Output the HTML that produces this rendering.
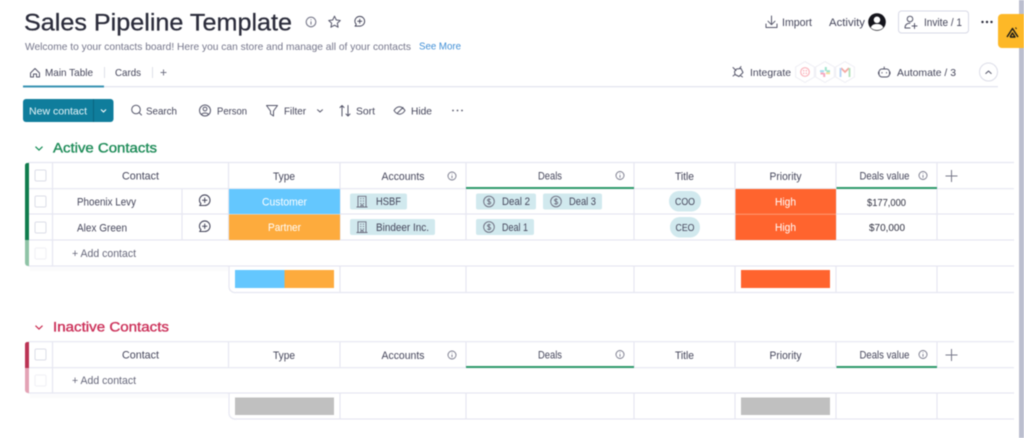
<!DOCTYPE html>
<html><head><meta charset="utf-8"><style>
html,body{margin:0;padding:0;background:#fff;width:1024px;height:438px;overflow:hidden}
svg{display:block;filter:blur(.45px)}
text{font-family:"Liberation Sans",sans-serif;font-size:11px;fill:#44455a}
.w{fill:#fff;font-size:11px}
.l{stroke:#e6e7f1;stroke-width:1.2;fill:none}
.i{stroke:#55566a;stroke-width:1;fill:none;stroke-linecap:round;stroke-linejoin:round}
.cb{fill:#fff;stroke:#dcdde8;stroke-width:1}
.chip{fill:#d1e9ee}
</style></head><body>
<svg width="1024" height="438" viewBox="0 0 1024 438" xmlns="http://www.w3.org/2000/svg">
<defs>
<symbol id="info" viewBox="0 0 10 10" overflow="visible"><circle cx="5" cy="5" r="4" fill="none" stroke="#77788a" stroke-width=".9"/><path d="M5 4.500V7.200M5 2.800V3.400" stroke="#77788a" stroke-width=".9" fill="none"/></symbol>
<symbol id="upd" viewBox="0 0 14 14" overflow="visible"><path d="M2.600 10.200C1.500 9.200 1 8 1 6.700A5.700 5.700 0 1 1 6.700 12.400H1.200C1.900 11.800 2.400 11 2.600 10.200Z" fill="none" stroke="#44455a" stroke-width="1.100" stroke-linejoin="round"/><path d="M6.700 3.900V9.500M3.900 6.700H9.500" stroke="#44455a" stroke-width="1.100" fill="none"/></symbol>
<symbol id="bld" viewBox="0 0 12 12" overflow="visible"><path d="M.5 11.500H11.500M2 11.500V.8H10V11.500M4.200 3.200H5.400M6.800 3.200H8M4.200 5.600H5.400M6.800 5.600H8M4.200 8H5.400M6.800 8H8M5 11.500V9.500H7V11.500" fill="none" stroke="#6a6b7d" stroke-width=".9"/></symbol>
<symbol id="usd" viewBox="0 0 12 12" overflow="visible"><circle cx="6" cy="6" r="5.300" fill="none" stroke="#6a6b7d" stroke-width=".9"/><path d="M7.700 4.200C7.200 3.400 4.400 3.200 4.400 4.700S7.800 5.600 7.800 7.300 4.800 8.800 4.200 7.800M6 2.600V9.400" fill="none" stroke="#6a6b7d" stroke-width=".8"/></symbol>
<symbol id="hex" viewBox="0 0 20 22" overflow="visible"><path d="M10 .6L19.400 6V16L10 21.400.6 16V6Z" fill="#fff" stroke="#eeeef4" stroke-width="1"/></symbol>
</defs>

<!-- Header -->
<text x="24" y="30.500" textLength="268" lengthAdjust="spacingAndGlyphs" style="font-size:24px;fill:#2a2b3a;stroke:#2a2b3a;stroke-width:.25">Sales Pipeline Template</text>
<use href="#info" x="305" y="16" width="12" height="12"/>
<path class="i" d="M334.500 16.200L336.300 20L340.300 20.500 337.300 23.200 338.100 27.200 334.500 25.200 330.900 27.200 331.700 23.200 328.700 20.500 332.700 20Z"/>
<use href="#upd" x="354" y="15.500" width="12" height="12"/>
<text x="25" y="50" textLength="386" lengthAdjust="spacingAndGlyphs" style="font-size:10.500px;fill:#74758a">Welcome to your contacts board! Here you can store and manage all of your contacts</text>
<text x="419" y="49.500" textLength="42" lengthAdjust="spacingAndGlyphs" style="font-size:10.500px;fill:#3f8ed6">See More</text>

<!-- Top right -->
<path class="i" d="M771.500 16V24.500M768 21.200L771.500 24.700 775 21.200M766 24V27.500H777V24" stroke="#44455a"/>
<text x="782" y="26" textLength="30" lengthAdjust="spacingAndGlyphs">Import</text>
<text x="829" y="26" textLength="36" lengthAdjust="spacingAndGlyphs">Activity</text>
<circle cx="877" cy="22" r="8.800" fill="#15151c"/>
<circle cx="877" cy="19.800" r="3.300" fill="#fff"/>
<path d="M870.800 27.500C871.800 24.800 874 24 877 24S882.200 24.800 883.200 27.500C881.500 29.400 879.500 30 877 30S872.500 29.400 870.800 27.500Z" fill="#fff"/>
<rect x="898.500" y="11" width="70" height="22" rx="3" fill="#fff" stroke="#d8d9e6"/>
<circle cx="910" cy="19" r="2.800" class="i"/>
<path class="i" d="M905 28C905 24.500 907 23.200 910 23.200M905 28H910M912 26H917M914.500 23.500V28.500"/>
<text x="924" y="26" textLength="38" lengthAdjust="spacingAndGlyphs">Invite / 1</text>
<circle cx="982.500" cy="22" r="1.200" fill="#2a2b3a"/><circle cx="987" cy="22" r="1.200" fill="#2a2b3a"/><circle cx="991.500" cy="22" r="1.200" fill="#2a2b3a"/>
<rect x="1019" y="0" width="5" height="438" fill="#bcbfcf"/>
<path d="M1024 14H1002A4 4 0 0 0 998 18V44A4 4 0 0 0 1002 48H1024Z" fill="#fdb827"/>
<path d="M1007 37L1012.500 28.500 1018 37M1010 37L1012.500 33 1015 37H1010" fill="none" stroke="#1a1a1a" stroke-width="1.400" stroke-linejoin="round"/>
<path d="M1015.500 27.500L1016.500 29" stroke="#1a1a1a" stroke-width="1"/>

<!-- Tabs -->
<path class="i" d="M30.500 73L35 68.500 39.500 73V77H36.500V74H33.500V77H30.500Z"/>
<text x="45" y="76" textLength="48" lengthAdjust="spacingAndGlyphs" style="font-size:10.500px">Main Table</text>
<path d="M104.500 67V78M152.500 67V78" stroke="#dfe0ea"/>
<text x="115" y="76" textLength="26" lengthAdjust="spacingAndGlyphs" style="font-size:10.500px">Cards</text>
<path d="M163.500 69.500V75.500M160.500 72.500H166.500" stroke="#77788a" stroke-width="1"/>
<rect x="23" y="86" width="975" height="1.300" fill="#e4e5f0"/>
<rect x="23" y="85.500" width="81" height="2" fill="#3a93b3"/>
<path class="i" d="M733 67.500L736 70.500M741 66.500L739.500 68.500M736.500 69L741 68.500 743 72.500 739 76.500 735 74.500 734.500 71.500ZM733 76L735 74.500M742.500 77L740.500 75.500"/>
<text x="750" y="76" textLength="41" lengthAdjust="spacingAndGlyphs" style="font-size:10.500px">Integrate</text>
<use href="#hex" x="795" y="61" width="20" height="22"/><use href="#hex" x="815" y="61" width="20" height="22"/><use href="#hex" x="835" y="61" width="20" height="22"/>
<circle cx="805" cy="72" r="4.300" fill="none" stroke="#fbb4bc" stroke-width="1.200"/><circle cx="803.700" cy="70.700" r=".8" fill="#fbb4bc"/><circle cx="806.300" cy="70.700" r=".8" fill="#fbb4bc"/><circle cx="803.700" cy="73.300" r=".8" fill="#fbb4bc"/><circle cx="806.300" cy="73.300" r=".8" fill="#fbb4bc"/>
<path d="M825.800 67V71" stroke="#9fe3cc" stroke-width="2"/><path d="M824.200 73V77" stroke="#f5a8c0" stroke-width="2"/><path d="M820 71.200H824" stroke="#a5dcf0" stroke-width="2"/><path d="M826 73.200H830" stroke="#f7dd9e" stroke-width="2"/><path d="M820.500 73.500H823.500" stroke="#f5a8c0" stroke-width="2"/><path d="M826.500 71.200H830" stroke="#9fe3cc" stroke-width="2"/>
<path d="M841 68L845 72 849 68" fill="none" stroke="#f5a9a2" stroke-width="1.800"/><path d="M849.500 68V77" stroke="#b2e0b8" stroke-width="1.800"/><path d="M840.500 68V77" stroke="#b4d0f5" stroke-width="1.800"/>
<rect x="879" y="69" width="10.500" height="8" rx="3" class="i"/><path class="i" d="M884.200 69V67M878.500 72V74M890 72V74M882 72.500V73M886.500 72.500V73"/>
<text x="897" y="76" textLength="59" lengthAdjust="spacingAndGlyphs" style="font-size:10.500px">Automate / 3</text>
<circle cx="988.500" cy="72" r="9" fill="#fff" stroke="#dcdde8"/>
<path class="i" d="M985.800 73.500L988.500 71 991.200 73.500" stroke="#33344a"/>

<!-- Toolbar -->
<rect x="23" y="99" width="90.500" height="23" rx="3" fill="#0f7d9c"/>
<path d="M93.500 99V122" stroke="#0a6580" stroke-width="1"/>
<text class="w" x="29" y="114.500" textLength="58" lengthAdjust="spacingAndGlyphs" style="font-size:10.500px;fill:#e8f6fa">New contact</text>
<path d="M101 109.500L103.500 112 106 109.500" fill="none" stroke="#fff" stroke-width="1.100"/>
<circle cx="136" cy="109.500" r="4.300" class="i"/><path class="i" d="M139.200 112.700L141.500 115"/>
<text x="146" y="114.500" textLength="31" lengthAdjust="spacingAndGlyphs" style="font-size:10.500px">Search</text>
<circle cx="205" cy="110.500" r="5.500" class="i"/><circle cx="205" cy="109" r="1.900" class="i"/><path class="i" d="M201.500 114.500C202.500 112.500 207.500 112.500 208.500 114.500"/>
<text x="217" y="114.500" textLength="30" lengthAdjust="spacingAndGlyphs" style="font-size:10.500px">Person</text>
<path class="i" d="M266.500 105.500H277.500L273.500 111V116L270.500 114V111Z"/>
<text x="284" y="114.500" textLength="22" lengthAdjust="spacingAndGlyphs" style="font-size:10.500px">Filter</text>
<path class="i" d="M317.500 109.800L320 112 322.500 109.800"/>
<path class="i" d="M342 116V105.500M340 107.500L342 105.500 344 107.500M348 105.500V116M346 114L348 116 350 114"/>
<text x="356" y="114.500" textLength="19" lengthAdjust="spacingAndGlyphs" style="font-size:10.500px">Sort</text>
<path class="i" d="M394 110.500C396 107.500 398 106.800 399.500 106.800S403 107.500 405 110.500C403 113.500 401 114.200 399.500 114.200S396 113.500 394 110.500ZM397 113.500L403 107.500"/>
<text x="411" y="114.500" textLength="21" lengthAdjust="spacingAndGlyphs" style="font-size:10.500px">Hide</text>
<circle cx="453" cy="110.500" r=".9" fill="#55566a"/><circle cx="457.500" cy="110.500" r=".9" fill="#55566a"/><circle cx="462" cy="110.500" r=".9" fill="#55566a"/>

<!-- Active section -->
<path d="M35.500 146.700L39 150 42.500 146.700" fill="none" stroke="#0f8a52" stroke-width="1.200"/>
<text x="53" y="152.500" textLength="104" lengthAdjust="spacingAndGlyphs" style="font-size:13.500px;fill:#1b8a56;stroke:#1b8a56;stroke-width:.35">Active Contacts</text>

<rect x="30" y="267" width="198" height="4" fill="#fbfbfc"/>
<path class="l" d="M28 162.500H1014M28 188.700H1014M28 214H1014M28 240H1014M28 266H1014"/>
<path class="l" d="M236 292.500H1014M229 266V286A6 6 0 0 0 236 292.500"/>
<path class="l" d="M52.500 163V266M182 189V240M228.500 163V240M340 163V240M466 163V240M634 163V240M735 163V240M836 163V240M937 163V240M340 266V292M466 266V292M634 266V292M735 266V292M836 266V292M937 266V292"/>
<path d="M29 163H27A2.500 2.500 0 0 0 25 165.500V240H29Z" fill="#107c4d"/>
<path d="M25 240H29V266H28A3 3 0 0 1 25 263Z" fill="#8fc3a6"/>
<rect x="35" y="170" width="11" height="11" rx="1.500" class="cb"/>
<rect x="35" y="196" width="11" height="11" rx="1.500" class="cb"/>
<rect x="35" y="222" width="11" height="11" rx="1.500" class="cb"/>
<rect x="35" y="248" width="11" height="11" rx="1.500" fill="#fff" stroke="#f0f0f5"/>

<text x="122" y="179.500" textLength="37" lengthAdjust="spacingAndGlyphs">Contact</text>
<text x="273" y="180" textLength="22" lengthAdjust="spacingAndGlyphs">Type</text>
<text x="381.500" y="180" textLength="43" lengthAdjust="spacingAndGlyphs">Accounts</text>
<use href="#info" x="447" y="171" width="10" height="10"/>
<text x="538" y="179.500" textLength="24" lengthAdjust="spacingAndGlyphs">Deals</text>
<use href="#info" x="615" y="170.500" width="10" height="10"/>
<text x="675" y="180" textLength="19" lengthAdjust="spacingAndGlyphs">Title</text>
<text x="769.500" y="180" textLength="32" lengthAdjust="spacingAndGlyphs">Priority</text>
<text x="859.500" y="179.500" textLength="50" lengthAdjust="spacingAndGlyphs">Deals value</text>
<use href="#info" x="918" y="170.500" width="10" height="10"/>
<path d="M951.500 170V182M945.500 176H957.500" stroke="#77788a" stroke-width="1"/>
<rect x="466" y="187" width="168" height="2" fill="#2e9a6b"/>
<rect x="836.500" y="187" width="100.500" height="2" fill="#2e9a6b"/>

<text x="77" y="205.500" textLength="59" lengthAdjust="spacingAndGlyphs">Phoenix Levy</text>
<text x="77" y="231.500" textLength="50" lengthAdjust="spacingAndGlyphs">Alex Green</text>
<use href="#upd" x="198.500" y="194" width="13" height="13"/>
<use href="#upd" x="198.500" y="220" width="13" height="13"/>
<rect x="229" y="189" width="111" height="25" fill="#64c7fe"/>
<rect x="229" y="214.500" width="111" height="25.500" fill="#fdab3d"/>
<text class="w" x="262" y="205.500" textLength="45" lengthAdjust="spacingAndGlyphs">Customer</text>
<text class="w" x="268" y="231" textLength="33" lengthAdjust="spacingAndGlyphs">Partner</text>

<rect class="chip" x="350" y="193.500" width="57" height="16" rx="2"/>
<use href="#bld" x="356" y="195.500" width="12" height="12"/>
<text x="376" y="205" textLength="25" lengthAdjust="spacingAndGlyphs">HSBF</text>
<rect class="chip" x="350" y="219" width="85" height="16" rx="2"/>
<use href="#bld" x="356" y="221" width="12" height="12"/>
<text x="376" y="231" textLength="53" lengthAdjust="spacingAndGlyphs">Bindeer Inc.</text>

<rect class="chip" x="476" y="193.500" width="60" height="16" rx="2"/>
<use href="#usd" x="483" y="195.500" width="12" height="12"/>
<text x="502" y="205" textLength="28" lengthAdjust="spacingAndGlyphs">Deal 2</text>
<rect class="chip" x="543" y="193.500" width="59" height="16" rx="2"/>
<use href="#usd" x="550" y="195.500" width="12" height="12"/>
<text x="569" y="205" textLength="27" lengthAdjust="spacingAndGlyphs">Deal 3</text>
<rect class="chip" x="476" y="219" width="58" height="16" rx="2"/>
<use href="#usd" x="483" y="221" width="12" height="12"/>
<text x="502" y="231" textLength="26" lengthAdjust="spacingAndGlyphs">Deal 1</text>

<rect class="chip" x="669" y="191" width="32" height="20.500" rx="10"/>
<text x="675" y="205" textLength="20" lengthAdjust="spacingAndGlyphs" style="font-size:10px">COO</text>
<rect class="chip" x="670" y="217" width="30" height="20.500" rx="10"/>
<text x="675.500" y="231" textLength="19" lengthAdjust="spacingAndGlyphs" style="font-size:10px">CEO</text>

<rect x="735.500" y="189" width="100.500" height="51" fill="#ff642e"/>
<path d="M735.500 214.200H836" stroke="#ff9a72" stroke-width="1"/>
<text class="w" x="775" y="205.500" textLength="21" lengthAdjust="spacingAndGlyphs">High</text>
<text class="w" x="775" y="231" textLength="21" lengthAdjust="spacingAndGlyphs">High</text>
<text x="867" y="206" textLength="39" lengthAdjust="spacingAndGlyphs" style="fill:#2f3040;font-size:10.500px">$177,000</text>
<text x="869" y="231" textLength="36" lengthAdjust="spacingAndGlyphs" style="fill:#2f3040;font-size:10.500px">$70,000</text>
<text x="72" y="257" textLength="64" lengthAdjust="spacingAndGlyphs" style="fill:#66677a">+ Add contact</text>
<rect x="235" y="270" width="49.500" height="18" fill="#64c7fe"/>
<rect x="284.500" y="270" width="49.500" height="18" fill="#fdab3d"/>
<rect x="741" y="270" width="89" height="18" fill="#ff642e"/>

<!-- Inactive section -->
<path d="M35.500 325.700L39 329 42.500 325.700" fill="none" stroke="#c9284e" stroke-width="1.200"/>
<text x="53" y="331.500" textLength="116" lengthAdjust="spacingAndGlyphs" style="font-size:13.500px;fill:#cb2f58;stroke:#cb2f58;stroke-width:.35">Inactive Contacts</text>
<rect x="30" y="394" width="198" height="4" fill="#fbfbfc"/>
<path class="l" d="M28 341.700H1014M28 367.700H1014M28 393H1014"/>
<path class="l" d="M236 419H1014M229 393V413A6 6 0 0 0 236 419"/>
<path class="l" d="M52.500 342V393M228.500 342V367M340 342V367M466 342V367M634 342V367M735 342V367M836 342V367M937 342V367M340 393V419M466 393V419M634 393V419M735 393V419M836 393V419M937 393V419"/>
<path d="M29 342H27A2.500 2.500 0 0 0 25 344.500V368H29Z" fill="#bb3354"/>
<path d="M25 368H29V393H28A3 3 0 0 1 25 390Z" fill="#e3a2b4"/>
<rect x="35" y="349" width="11" height="11" rx="1.500" class="cb"/>
<rect x="35" y="375" width="11" height="11" rx="1.500" fill="#fff" stroke="#f0f0f5"/>
<text x="122" y="358.500" textLength="37" lengthAdjust="spacingAndGlyphs">Contact</text>
<text x="273" y="359" textLength="22" lengthAdjust="spacingAndGlyphs">Type</text>
<text x="381.500" y="359" textLength="43" lengthAdjust="spacingAndGlyphs">Accounts</text>
<use href="#info" x="447" y="350" width="10" height="10"/>
<text x="538" y="358.500" textLength="24" lengthAdjust="spacingAndGlyphs">Deals</text>
<use href="#info" x="615" y="349.500" width="10" height="10"/>
<text x="675" y="359" textLength="19" lengthAdjust="spacingAndGlyphs">Title</text>
<text x="769.500" y="359" textLength="32" lengthAdjust="spacingAndGlyphs">Priority</text>
<text x="859.500" y="358.500" textLength="50" lengthAdjust="spacingAndGlyphs">Deals value</text>
<use href="#info" x="918" y="349.500" width="10" height="10"/>
<path d="M951.500 349V361M945.500 355H957.500" stroke="#77788a" stroke-width="1"/>
<rect x="466" y="366" width="168" height="2" fill="#2e9a6b"/>
<rect x="836.500" y="366" width="100.500" height="2" fill="#2e9a6b"/>
<text x="72" y="384" textLength="64" lengthAdjust="spacingAndGlyphs" style="fill:#66677a">+ Add contact</text>
<rect x="235" y="397.500" width="99" height="17.500" fill="#c0c0c0"/>
<rect x="741" y="397.500" width="89" height="17.500" fill="#c0c0c0"/>
</svg>
</body></html>
